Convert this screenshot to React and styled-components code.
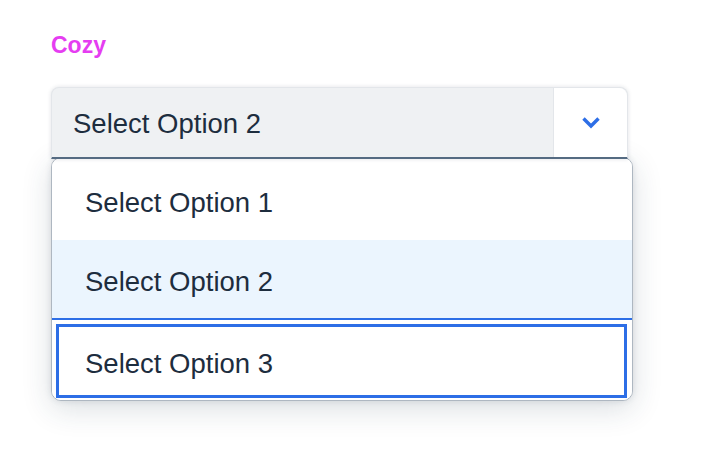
import React from 'react'
import styled, { createGlobalStyle } from 'styled-components'

const GlobalStyle = createGlobalStyle`
    body {
        margin: 0;
        background: #ffffff;
        font-family: "Liberation Sans", Arial, sans-serif;
    }
`;

const Page = styled.div`
    padding: 34px 0 60px 51px;
`;

const Label = styled.div`
    font-size: 23px;
    line-height: 23px;
    font-weight: 700;
    color: #e53df1;
    margin-bottom: 30px;
`;

const SelectWrap = styled.div`
    width: 577px;
`;

const SelectBox = styled.div`
    position: relative;
    z-index: 2;
    display: flex;
    height: 72px;
    box-sizing: border-box;
    background: #eff1f3;
    border: 1px solid #e3e6ea;
    border-bottom: 2px solid #556b82;
    border-radius: 8px 8px 0 0;
    box-shadow: 0 0 4px rgba(34, 53, 72, 0.14);
`;

const Value = styled.div`
    flex: 1;
    display: flex;
    align-items: center;
    padding: 3px 0 0 21px;
    font-size: 27.5px;
    color: #1d2d3e;
`;

const ArrowButton = styled.div`
    width: 73px;
    display: flex;
    align-items: center;
    justify-content: center;
    background: #ffffff;
    border-left: 1px solid #e3e6ea;
    border-radius: 0 8px 0 0;
`;

const Popover = styled.div`
    position: relative;
    z-index: 1;
    margin-top: -2px;
    padding-top: 2px;
    width: 582px;
    box-sizing: border-box;
    background: #ffffff;
    border: 1px solid #aeb7c1;
    border-radius: 10px;
    overflow: hidden;
    box-shadow: 0 8px 30px rgba(34, 53, 72, 0.16), 0 0 6px rgba(34, 53, 72, 0.12);
`;

const Item = styled.div`
    height: 80px;
    box-sizing: border-box;
    display: flex;
    padding: ${p => (p.$focused ? '4px 5px 2px 4px' : '0')};
    background: ${p => (p.$selected ? '#ebf5fe' : '#ffffff')};
    border-bottom: ${p => (p.$selected ? '2px solid #2d6ee6' : 'none')};
`;

const ItemText = styled.div`
    flex: 1;
    display: flex;
    align-items: center;
    padding: 5px 0 0 ${p => (p.$focused ? 26 : 33)}px;
    font-size: 27.5px;
    color: #1d2d3e;
    border: ${p => (p.$focused ? '3px solid #2d6ee6' : 'none')};
`;

const Chevron = () => (
    <svg width="20" height="13" viewBox="0 0 20 13">
        <path d="M2.5 2.5 L10 10 L17.5 2.5" fill="none" stroke="#2d6ee6" strokeWidth="3.4" />
    </svg>
);

const options = ['Select Option 1', 'Select Option 2', 'Select Option 3'];

export default function App() {
    return (
        <Page>
            <GlobalStyle />
            <Label>Cozy</Label>
            <SelectWrap>
                <SelectBox>
                    <Value>Select Option 2</Value>
                    <ArrowButton>
                        <Chevron />
                    </ArrowButton>
                </SelectBox>
                <Popover>
                    {options.map((o, i) => (
                        <Item key={o} $selected={i === 1} $focused={i === 2}>
                            <ItemText $focused={i === 2}>{o}</ItemText>
                        </Item>
                    ))}
                </Popover>
            </SelectWrap>
        </Page>
    )
}
